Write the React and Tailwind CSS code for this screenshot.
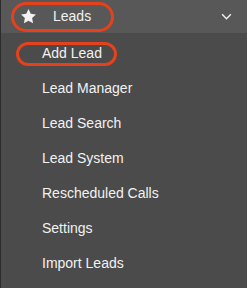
const items = ['Lead Manager', 'Lead Search', 'Lead System', 'Rescheduled Calls', 'Settings', 'Import Leads']

const Star = () => (
  <svg viewBox="0 0 24 24" className="h-[17px] w-[17px]" fill="#f2f2f2">
    <path d="M12 1.5l3.2 6.7 7.3.9-5.4 5.1 1.4 7.3L12 17.9l-6.5 3.6 1.4-7.3-5.4-5.1 7.3-.9z" />
  </svg>
)

const Chevron = () => (
  <svg viewBox="0 0 12 8" className="h-[7px] w-[11px]" fill="none" stroke="#f2f2f2" strokeWidth="1.6">
    <path d="M1 1.5l5 5 5-5" />
  </svg>
)

const App = () => {
  return (
    <div
      className="h-[288px] w-[247px] overflow-hidden border-l border-[#2c2c2c] bg-[#4b4b4b] text-[14px] text-[#f2f2f2]"
      style={{ fontFamily: '"Liberation Sans", Arial, sans-serif' }}
    >
      <div className="flex h-[33px] items-center justify-between bg-[#585858] pr-[15px]">
        <div className="ml-[10px] flex h-[30px] w-[103px] items-center rounded-full border-[3px] border-[#e5411c] pl-[6px]">
          <Star />
          <span className="ml-[16px]">Leads</span>
        </div>
        <Chevron />
      </div>
      <div className="flex flex-col pt-[3px]">
        <div className="flex h-[35px] items-center">
          <div className="ml-[15px] flex h-[24px] w-[101px] items-center rounded-full border-[3px] border-[#e5411c] pl-[23px]">
            Add Lead
          </div>
        </div>
        {items.map((item) => (
          <div key={item} className="flex h-[35px] items-center pl-[41px]">
            {item}
          </div>
        ))}
      </div>
    </div>
  )
}

export default App
